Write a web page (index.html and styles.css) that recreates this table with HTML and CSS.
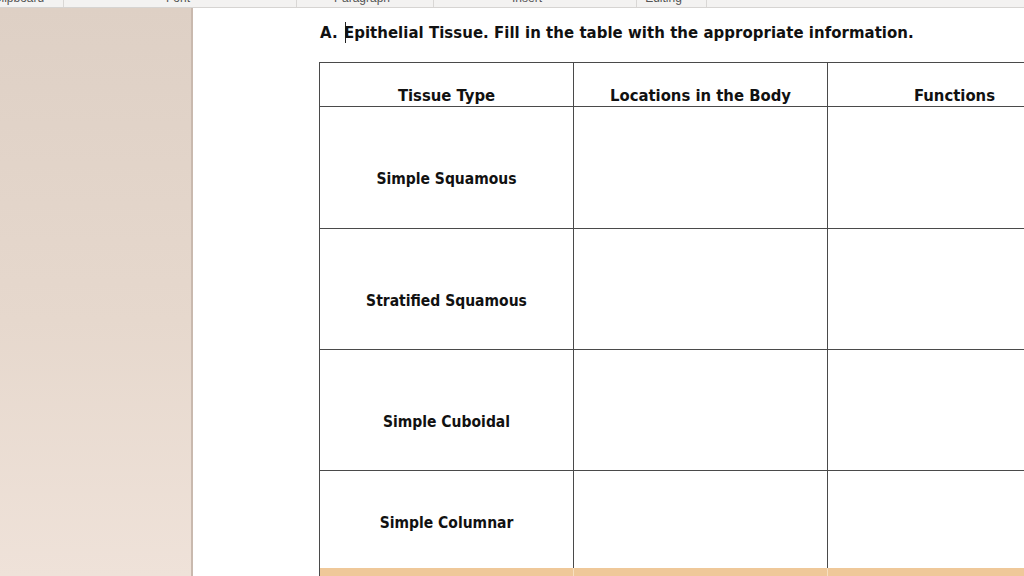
FILE: index.html
```html
<!DOCTYPE html>
<html>
<head>
<meta charset="utf-8">
<link rel="stylesheet" href="styles.css">
</head>
<body>
<div class="ribbon">
  <div class="group g1"><span>Clipboard</span></div>
  <div class="group g2"><span>Font</span></div>
  <div class="group g3"><span>Paragraph</span></div>
  <div class="group g4"><span>Insert</span></div>
  <div class="group g5"><span>Editing</span></div>
  <div class="group g6"></div>
</div>
<div class="workspace">
  <div class="sidebar"></div>
  <div class="page">
    <p class="heading">A. <span class="caret"></span>Epithelial Tissue. Fill in the table with the appropriate information.</p>
    <table class="grid">
      <tr class="head">
        <td>Tissue Type</td>
        <td>Locations in the Body</td>
        <td>Functions</td>
      </tr>
      <tr class="row first"><td>Simple Squamous</td><td></td><td></td></tr>
      <tr class="row"><td>Stratified Squamous</td><td></td><td></td></tr>
      <tr class="row"><td>Simple Cuboidal</td><td></td><td></td></tr>
      <tr class="row last"><td>Simple Columnar</td><td></td><td></td></tr>
      <tr class="shade"><td></td><td></td><td></td></tr>
    </table>
  </div>
</div>
</body>
</html>
```
FILE: styles.css
```css
html, body {
  margin: 0;
  padding: 0;
  width: 1024px;
  height: 576px;
  overflow: hidden;
  background: #ffffff;
}

.ribbon {
  height: 7px;
  display: flex;
  background: #f3f2f1;
  border-bottom: 1px solid #d6d4d2;
  overflow: hidden;
  font-family: "Liberation Sans", sans-serif;
  font-size: 12px;
  color: #555;
}

.group {
  position: relative;
  border-right: 1px solid #d9d7d5;
  height: 7px;
  overflow: hidden;
  text-align: center;
}

.group span {
  display: block;
  line-height: 12px;
  margin-top: -8px;
  white-space: nowrap;
}

.g1 { width: 63px; }
.g1 span { margin-left: -26px; }
.g2 { width: 232px; }
.g2 span { margin-left: -4px; }
.g3 { width: 136px; }
.g3 span { margin-left: -6px; }
.g4 { width: 202px; }
.g4 span { margin-left: -16px; }
.g5 { width: 69px; }
.g5 span { margin-left: -16px; }
.g6 { flex: 1; border-right: none; }

.workspace {
  display: flex;
  height: 568px;
}

.sidebar {
  width: 191px;
  flex: none;
  background: linear-gradient(to bottom, #ded0c5 0%, #e6d8cd 55%, #efe2d9 100%);
  border-right: 2px solid #c9b9ae;
}

.page {
  flex: 1;
  background: #ffffff;
  padding-left: 126px;
  overflow: hidden;
}

.heading {
  margin: 14px 0 0 1px;
  font-family: "DejaVu Sans Condensed", "DejaVu Sans", sans-serif;
  font-weight: bold;
  font-size: 16.6px;
  letter-spacing: 0.05px;
  line-height: 22px;
  color: #111;
  white-space: nowrap;
}

.caret {
  display: inline-block;
  width: 1px;
  height: 21px;
  background: #222;
  vertical-align: -5px;
  margin-left: 2px;
  margin-right: -2px;
}

.grid {
  margin-top: 18px;
  border-collapse: collapse;
  table-layout: fixed;
  width: 763px;
  font-family: "DejaVu Sans Condensed", "DejaVu Sans", sans-serif;
  font-weight: bold;
  font-size: 15.5px;
  color: #111;
}

.grid td {
  width: 253px;
  border: 1px solid #4a4a4a;
  padding: 0;
  text-align: center;
}

.head td {
  height: 44px;
  vertical-align: bottom;
  padding-bottom: 1px;
  box-sizing: border-box;
  font-size: 16.5px;
}

.row td {
  height: 121px;
  vertical-align: top;
  padding-top: 63px;
  box-sizing: border-box;
}

.row.first td {
  height: 122px;
}

.row.last td {
  height: 97px;
  padding-top: 43px;
  border-bottom: none;
}

.shade td {
  height: 10px;
  background: #efc899;
  border-top: none;
  border-bottom: none;
  border-left: 1px solid #f7dfc0;
  border-right: 1px solid #f7dfc0;
}

.shade td:first-child {
  border-left: 1px solid #4a4a4a;
}
```
